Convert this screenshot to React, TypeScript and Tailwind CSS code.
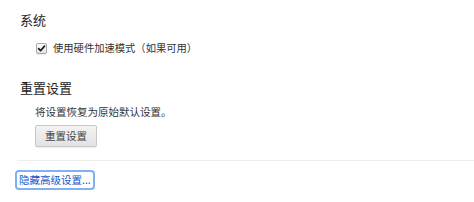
import React from "react";

const font = { fontFamily: '"Noto Sans CJK SC", "Noto Sans", sans-serif' };

function Checkbox() {
  return (
    <span className="flex h-[11px] w-[11px] items-center justify-center rounded-[2px] border border-[#a9a9a9] bg-gradient-to-b from-[#fdfdfd] to-[#e4e4e4] shadow-[0_1px_1px_rgba(0,0,0,0.08)]">
      <svg viewBox="0 0 10 10" className="h-[9px] w-[9px]">
        <path d="M1.8 5.2 L4 7.4 L8.4 2.4" fill="none" stroke="#1a1a1a" strokeWidth="1.8" strokeLinecap="round" strokeLinejoin="round" />
      </svg>
    </span>
  );
}

export default function App() {
  return (
    <div className="h-[202px] w-[474px] overflow-hidden bg-white text-[#303030]" style={font}>
      <div className="pl-[20px] pt-[12px]">
        <div className="h-4 text-[13px] leading-4 text-[#222]">系统</div>
        <div className="mt-[12px] flex h-4 items-center pl-[16px]">
          <Checkbox />
          <span className="ml-[6px] text-[10.3px] leading-4 text-[#333]">使用硬件加速模式（如果可用）</span>
        </div>
        <div className="mt-[24px] h-4 text-[13px] leading-4 text-[#222]">重置设置</div>
        <div className="pl-[15px]">
          <div className="mt-[9px] h-[14px] text-[10.5px] leading-[14px] text-[#333]">将设置恢复为原始默认设置。</div>
          <button className="mt-[6px] flex h-[22px] w-[62px] items-center justify-center rounded-[2px] border border-[#c8c8c8] bg-gradient-to-b from-[#f3f3f3] to-[#e2e2e2] text-[10.5px] text-[#444] shadow-[0_1px_0_rgba(0,0,0,0.06)]">
            重置设置
          </button>
        </div>
      </div>
      <div className="ml-[17px] mt-[13px] h-px bg-[#ececec]" />
      <div className="pl-[16px] pt-[4px]">
        <span className="inline-flex h-[18px] items-center rounded-[3px] px-[3px] text-[10.5px] text-[#1a55c8] outline outline-2 outline-[#7fb0f2] -outline-offset-1">
          隐藏高级设置...
        </span>
      </div>
    </div>
  );
}
